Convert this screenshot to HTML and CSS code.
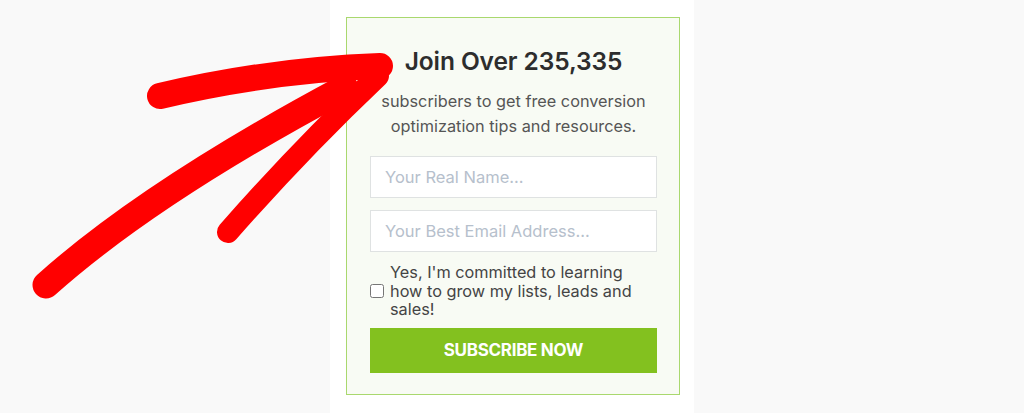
FILE: index.html
```html
<!DOCTYPE html>
<html>
<head>
<meta charset="utf-8">
<link rel="stylesheet" href="styles.css">
</head>
<body>
<div class="page">
  <div class="column">
    <div class="box">
      <h1 class="title">Join Over 235,335</h1>
      <p class="sub">subscribers to get free conversion optimization tips and resources.</p>
      <form class="form">
        <input class="field" type="text" placeholder="Your Real Name...">
        <input class="field" type="text" placeholder="Your Best Email Address...">
        <label class="consent">
          <input class="check" type="checkbox">
          <span class="consent-text">Yes, I'm committed to learning how to grow my lists, leads and sales!</span>
        </label>
        <button class="btn" type="button">SUBSCRIBE NOW</button>
      </form>
    </div>
  </div>
  <svg class="arrow" width="420" height="320" viewBox="0 0 420 320">
    <g fill="none" stroke="#ff0000" stroke-linecap="round" stroke-linejoin="round">
      <path d="M46 285 Q150 192 345 88" stroke-width="27"/>
      <path d="M160 96 Q270 70 380 66" stroke-width="26"/>
      <path d="M228 232 Q300 150 378 76" stroke-width="22"/>
    </g>
  </svg>
</div>
</body>
</html>
```
FILE: styles.css
```css
html, body {
  margin: 0;
  padding: 0;
  background: #f9f9f9;
}
.page {
  position: relative;
  width: 1024px;
  height: 413px;
  display: flex;
  justify-content: center;
  overflow: hidden;
}
.column {
  width: 364px;
  background: #ffffff;
  padding: 17px 14px 0 16px;
  box-sizing: border-box;
}
.box {
  width: 334px;
  box-sizing: border-box;
  border: 1.5px solid #a9d86e;
  background: #f8fbf4;
  padding: 25px 22px 21px 23px;
  font-family: "Inter", "Liberation Sans", sans-serif;
}
.title {
  margin: 0;
  text-align: center;
  font-size: 24.5px;
  line-height: 36px;
  font-weight: 600;
  color: #2d2d2d;
  letter-spacing: -0.1px;
}
.sub {
  margin: 10px 0 0;
  text-align: center;
  font-size: 16.3px;
  line-height: 25px;
  color: #555555;
  padding: 0 4px;
}
.form {
  margin-top: 17px;
  display: flex;
  flex-direction: column;
}
.field {
  height: 42px;
  box-sizing: border-box;
  border: 1px solid #dfe2e2;
  background: #ffffff;
  padding: 0 14px;
  font-family: inherit;
  font-size: 16.5px;
  color: #333;
  margin: 0 0 12px;
}
.field::placeholder {
  color: #b6c0cc;
}
.consent {
  display: flex;
  align-items: center;
  margin-top: -1px;
}
.check {
  margin: 0 6px 0 0;
  width: 14px;
  height: 14px;
}
.consent-text {
  font-size: 16.3px;
  line-height: 18.5px;
  color: #444444;
  width: 262px;
}
.btn {
  margin-top: 9px;
  height: 45px;
  border: none;
  background: #83c11f;
  color: #ffffff;
  font-family: inherit;
  font-weight: 700;
  font-size: 17px;
  letter-spacing: -0.3px;
}
.arrow {
  position: absolute;
  left: 0;
  top: 0;
}
```
